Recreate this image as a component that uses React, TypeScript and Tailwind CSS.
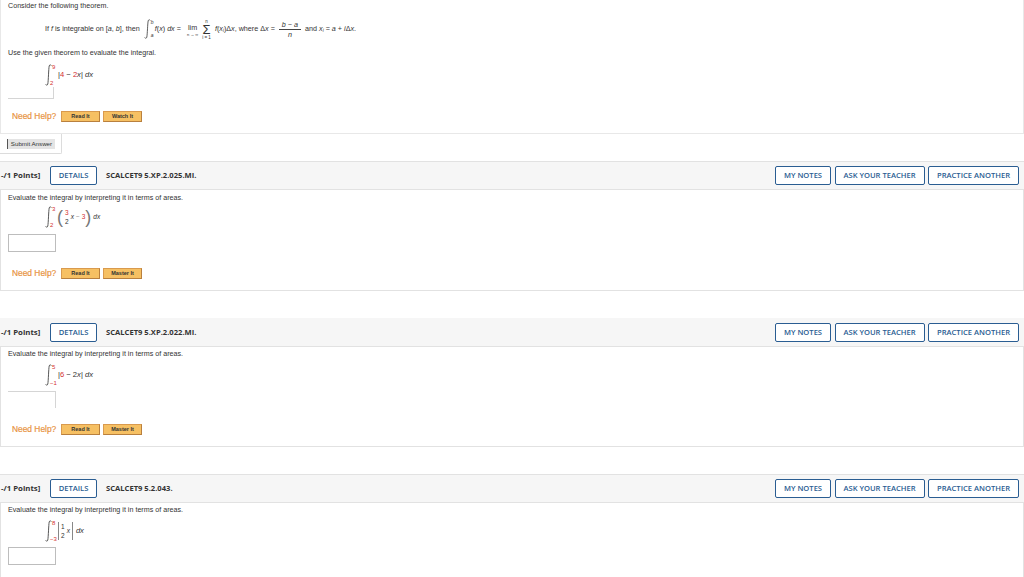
import type { ReactNode } from 'react';

const Red = ({ children }: { children: ReactNode }) => <span className="text-[#d32f2f]">{children}</span>;

// thin integral sign, the serif glyph came out too wide
const IntegralSign = ({ h = 22 }: { h?: number }) => (
  <svg width="7" height={h} viewBox="0 0 7 22" preserveAspectRatio="none" className="shrink-0">
    <path d="M6.3 1.6C5.6.4 4.6.6 4.2 2 3.6 4.5 3.4 17 2.8 20 2.4 21.4 1.4 21.6.7 20.4" fill="none" stroke="#444" strokeWidth="0.9" />
  </svg>
);

const Integral = ({ upper, lower }: { upper: string; lower: string }) => (
  <span className="inline-flex items-center h-[24px]">
    <IntegralSign />
    <span className="flex flex-col justify-between h-[24px] text-[6px] leading-[8px] text-[#d32f2f] w-[6px]">
      <span>{upper}</span>
      <span className="-ml-[2px]">{lower}</span>
    </span>
  </span>
);

const ActionButton = ({ label, w }: { label: string; w: string }) => (
  <button className={`${w} h-[19px] pt-[1px] border border-[#2a5d92] rounded-[2px] bg-white text-[7.6px] font-semibold text-[#2a5d92] font-['Open_Sans',sans-serif] flex items-center justify-center whitespace-nowrap`}>
    {label}
  </button>
);

const HelpButton = ({ label, w }: { label: string; w: string }) => (
  <button className={`${w} h-[11px] bg-[#f6c063] border border-[#d99a4e] border-r-[#b9803e] border-b-[#b9803e] text-[5.5px] font-bold text-[#333] whitespace-nowrap`}>
    {label}
  </button>
);

const HelpRow = ({ second }: { second: string }) => (
  <div className="flex items-center h-[12px] pl-[11px]">
    <span className="w-[49px] text-[8.4px] text-[#e8933f] whitespace-nowrap [-webkit-text-stroke:0.2px_#e8933f]">Need Help?</span>
    <HelpButton label="Read It" w="w-[39px]" />
    <span className="w-[3px]" />
    <HelpButton label={second} w="w-[39px]" />
  </div>
);

const Header = ({ code, topBorder = true }: { code: string; topBorder?: boolean }) => (
  <div className={`h-[29px] bg-[#f6f6f6] border-b border-[#e2e2e2] flex items-center justify-between pr-[5px] ${topBorder ? 'border-t' : ''}`}>
    <div className="flex items-center font-['Open_Sans',sans-serif]">
      <span className="w-[50px] pl-[1px] pt-[1px] text-[7.8px] font-bold text-[#333] whitespace-nowrap">-/1 Points]</span>
      <span className="w-[47px] h-[19px] pt-[1px] border border-[#2a5d92] rounded-[2px] bg-white text-[7.6px] text-[#2a5d92] font-semibold flex items-center justify-center">DETAILS</span>
      <span className="ml-[9px] pt-[1px] text-[7.6px] font-bold text-[#333] whitespace-nowrap">{code}</span>
    </div>
    <div className="flex gap-[3.5px]">
      <ActionButton label="MY NOTES" w="w-[56px]" />
      <ActionButton label="ASK YOUR TEACHER" w="w-[90px]" />
      <ActionButton label="PRACTICE ANOTHER" w="w-[91px]" />
    </div>
  </div>
);

const Question = ({ code, topBorder, body, children }: { code: string; topBorder?: boolean; body: string; children: ReactNode }) => (
  <section>
    <Header code={code} topBorder={topBorder} />
    <div className={`${body} border-x border-b border-[#e2e2e2] pl-[7px] text-[7px] text-[#333]`}>{children}</div>
  </section>
);

const Prompt = ({ children }: { children: ReactNode }) => (
  <p className="text-[7.15px] leading-[9px] text-[#333] whitespace-nowrap">{children}</p>
);

const Frac = ({ top, bottom, red }: { top: string; bottom: string; red?: boolean }) => (
  <span className="inline-flex flex-col items-center text-[6.5px] leading-[9px] mx-[2px]">
    <span className={red ? 'text-[#d32f2f]' : ''}>{top}</span>
    <span>{bottom}</span>
  </span>
);

export default function App() {
  return (
    <div className="w-[1024px] h-[577px] overflow-hidden bg-white font-['Liberation_Sans',Arial,sans-serif]">
      {/* First question, header scrolled off */}
      <section className="h-[134px] border-x border-b border-[#e8e8e8] pl-[7px] text-[#333]">
        <p className="pt-[2px] text-[7.15px] leading-[9px]">Consider the following theorem.</p>
        <div className="flex items-center h-[24px] mt-[6px] pl-[37px] text-[7.2px] whitespace-nowrap">
          <span>If <i>f</i> is integrable on [<i>a</i>, <i>b</i>], then</span>
          <span className="ml-[4px]"><IntegralSign h={20} /></span>
          <span className="flex flex-col justify-between h-[20px] text-[5px] leading-[7px] w-[4px]"><i>b</i><i>a</i></span>
          <span><i>f</i>(<i>x</i>) <i>dx</i> =</span>
          <span className="flex flex-col items-center ml-[6px] pt-[3px]">
            <span className="leading-[8px]">lim</span>
            <span className="text-[4px] leading-[5px]">n → ∞</span>
          </span>
          <span className="flex flex-col items-center mx-[4px]">
            <span className="text-[4.5px] leading-[5px]">n</span>
            <span className="text-[13px] leading-[11px]">Σ</span>
            <span className="text-[4.5px] leading-[5px]">i = 1</span>
          </span>
          <span><i>f</i>(<i>x<sub className="text-[4.5px]">i</sub></i>)Δ<i>x</i>, where Δ<i>x</i> =</span>
          <span className="inline-flex flex-col items-center mx-[4px] leading-[9px]">
            <span className="border-b border-[#444] px-[3px]"><i>b</i> − <i>a</i></span>
            <i>n</i>
          </span>
          <span>and <i>x<sub className="text-[4.5px]">i</sub></i> = <i>a</i> + <i>i</i>Δ<i>x</i>.</span>
        </div>
        <p className="mt-[8px] text-[7.15px] leading-[9px]">Use the given theorem to evaluate the integral.</p>
        <div className="flex items-center h-[24px] mt-[5px] pl-[37px] text-[7.6px] whitespace-nowrap">
          <Integral upper="9" lower="2" />
          <span>|<Red>4</Red> − <Red>2</Red><i>x</i>| <i>dx</i></span>
        </div>
        <div className="w-[46px] h-[12px] border-r border-b border-[#d5d5d5]" />
        <div className="mt-[11px] -ml-[7px]"><HelpRow second="Watch It" /></div>
      </section>
      <div className="w-[62px] h-[20px] border-r border-b border-[#dcdcdc] rounded-br-[2px] pl-[7px] flex items-center">
        <button className="w-[48px] h-[10px] bg-[#e4e4e4] border-l border-[#555] text-[6.2px] text-[#333] whitespace-nowrap">Submit Answer</button>
      </div>

      <div className="mt-[7px]">
        <Question code="SCALCET9 5.XP.2.025.MI." body="h-[101px]">
          <div className="pt-[4px]"><Prompt>Evaluate the integral by interpreting it in terms of areas.</Prompt></div>
          <div className="flex items-center h-[24px] mt-[2px] pl-[37px]">
            <Integral upper="3" lower="2" />
            <span className="text-[18px] leading-[22px] font-light text-[#777] -ml-[1px]">(</span>
            <Frac top="3" bottom="2" red />
            <i className="text-[6.5px]">x</i>
            <span className="text-[6.5px] mx-[2px] text-[#888]">−</span>
            <span className="text-[6.5px] text-[#d32f2f]">3</span>
            <span className="text-[18px] leading-[22px] font-light text-[#777]">)</span>
            <i className="text-[6.5px] ml-[2px]">dx</i>
          </div>
          <div className="w-[48px] h-[18px] mt-[5px] border border-[#bdbdbd]" />
          <div className="mt-[15px] -ml-[7px]"><HelpRow second="Master It" /></div>
        </Question>
      </div>

      <div className="mt-[27px]">
        <Question code="SCALCET9 5.XP.2.022.MI." topBorder={false} body="h-[100px]">
          <div className="pt-[3px]"><Prompt>Evaluate the integral by interpreting it in terms of areas.</Prompt></div>
          <div className="flex items-center h-[24px] mt-[4px] pl-[37px] text-[7.6px] whitespace-nowrap">
            <Integral upper="5" lower="−1" />
            <span>|<Red>6</Red> − 2<i>x</i>| <i>dx</i></span>
          </div>
          <div className="w-[48px] h-[17px] mt-[4px] border-r border-t border-[#d5d5d5]" />
          <div className="mt-[15px] -ml-[7px]"><HelpRow second="Master It" /></div>
        </Question>
      </div>

      <div className="mt-[27px]">
        <Question code="SCALCET9 5.2.043." body="h-[80px]">
          <div className="pt-[3px]"><Prompt>Evaluate the integral by interpreting it in terms of areas.</Prompt></div>
          <div className="flex items-center h-[24px] mt-[4px] pl-[37px]">
            <Integral upper="8" lower="−3" />
            <span className="w-px h-[18px] bg-[#888]" />
            <Frac top="1" bottom="2" />
            <i className="text-[6.5px]">x</i>
            <span className="w-px h-[18px] bg-[#888] ml-[2px]" />
            <i className="text-[7.6px] ml-[3px]">dx</i>
          </div>
          <div className="w-[48px] h-[18px] mt-[4px] border border-[#bdbdbd]" />
        </Question>
      </div>
    </div>
  );
}
